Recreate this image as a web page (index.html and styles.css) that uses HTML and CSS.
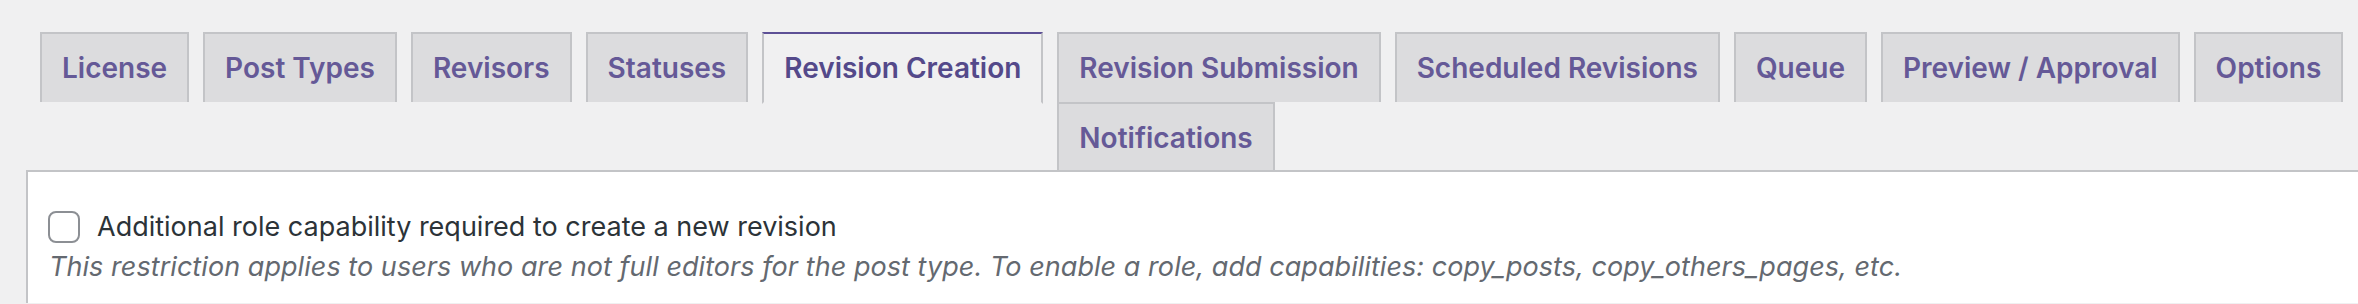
FILE: index.html
```html
<!DOCTYPE html>
<html lang="en">
<head>
<meta charset="utf-8">
<title>Revisions Settings</title>
<link rel="stylesheet" href="styles.css">
</head>
<body>
<div class="wrap">
  <nav class="nav-tab-wrapper">
    <a class="nav-tab" href="#">License</a>
    <a class="nav-tab" href="#">Post Types</a>
    <a class="nav-tab" href="#">Revisors</a>
    <a class="nav-tab" href="#">Statuses</a>
    <a class="nav-tab nav-tab-active" href="#">Revision Creation</a>
    <a class="nav-tab" href="#">Revision Submission</a>
    <a class="nav-tab" href="#">Scheduled Revisions</a>
    <a class="nav-tab" href="#">Queue</a>
    <a class="nav-tab" href="#">Preview / Approval</a>
    <a class="nav-tab" href="#">Options</a>
    <a class="nav-tab nav-tab-wrapped" href="#">Notifications</a>
  </nav>
  <div class="panel">
    <label class="option-row">
      <input type="checkbox" class="checkbox">
      <span class="option-label">Additional role capability required to create a new revision</span>
    </label>
    <p class="description">This restriction applies to users who are not full editors for the post type. To enable a role, add capabilities: copy_posts, copy_others_pages, etc.</p>
  </div>
</div>
</body>
</html>
```
FILE: styles.css
```css
html, body {
  margin: 0;
  padding: 0;
  background: #f0f0f1;
  font-family: Inter, "Liberation Sans", sans-serif;
  height: 304px;
  overflow: hidden;
}

.wrap {
  margin-left: 26px;
  padding-top: 14px;
}

.nav-tab-wrapper {
  display: flow-root;
  padding-top: 18px;
  border-bottom: 2px solid #c3c4c7;
}

.nav-tab {
  float: left;
  margin-left: 14px;
  padding: 10px 20px;
  border: 2px solid #c3c4c7;
  border-bottom: none;
  background: #dcdcde;
  color: #655997;
  font-size: 28px;
  font-weight: 600;
  line-height: 48px;
  text-decoration: none;
  white-space: nowrap;
}

.nav-tab-active {
  background: #f0f0f1;
  border-top-color: #5d5096;
  color: #54498a;
  border-bottom: 2px solid #f0f0f1;
}

.nav-tab-wrapped {
  padding-bottom: 8px;
}

.panel {
  background: #fff;
  border-left: 2px solid #c3c4c7;
  padding: 35px 20px 16px 20px;
}

.option-row {
  display: flex;
  align-items: center;
  height: 40px;
}

.checkbox {
  appearance: none;
  -webkit-appearance: none;
  width: 32px;
  height: 32px;
  margin: 0 17px 0 0;
  border: 2px solid #8c8f94;
  border-radius: 8px;
  background: #fff;
  box-sizing: border-box;
}

.option-label {
  font-size: 27px;
  line-height: 40px;
  color: #2c3338;
}

.description {
  margin: 0;
  font-size: 27px;
  line-height: 40px;
  font-style: italic;
  color: #646970;
  padding-left: 1px;
  letter-spacing: 0.05px;
}
```
